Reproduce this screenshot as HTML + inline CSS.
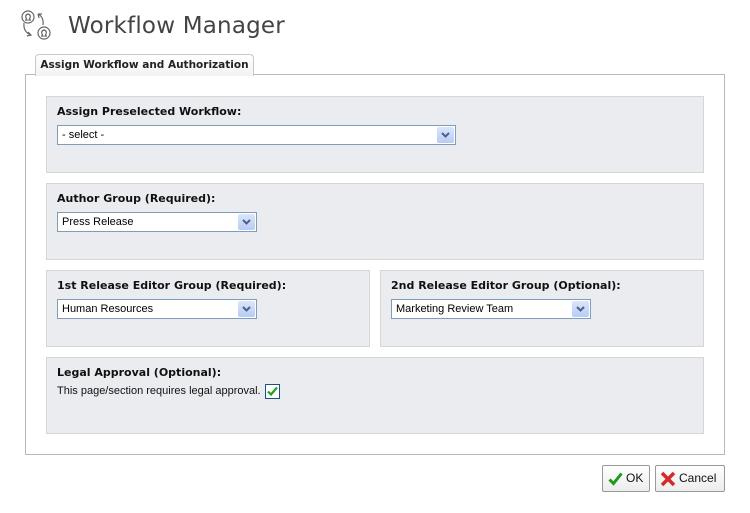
<!DOCTYPE html>
<html><head><style>
body{margin:0;width:750px;height:513px;background:#fff;font-family:"Liberation Sans",sans-serif;position:relative;overflow:hidden}
.h{position:absolute;left:68px;top:13px;font-size:23px;color:#444;font-family:"DejaVu Sans","Liberation Sans",sans-serif;letter-spacing:0.2px;white-space:nowrap}
.tab{position:absolute;left:35px;top:54px;width:217px;height:21px;border:1px solid #c8c8c8;border-bottom:none;border-radius:4px 4px 0 0;background:linear-gradient(#fff,#f2f2f2);font-family:"DejaVu Sans",sans-serif;font-size:10.5px;font-weight:bold;color:#222;line-height:21px;text-align:center;z-index:2;white-space:nowrap}
.box{position:absolute;left:25px;top:74px;width:698px;height:379px;border:1px solid #b8b8b8;background:#fff}
.p{position:absolute;background:#ebecf0;border:1px solid #d6d6d8;box-sizing:border-box}
.l{position:absolute;left:10px;top:8px;font-family:"DejaVu Sans",sans-serif;font-size:11px;font-weight:bold;color:#111;white-space:nowrap}
.s{position:absolute;left:10px;top:28px;height:20px;box-sizing:border-box;border:1px solid #7f9db9;background:#fff;font-size:11px;line-height:18px;padding-left:4px;color:#000}
.s i{position:absolute;right:1px;top:1px;width:17px;height:16px;background:linear-gradient(#dbe6fb,#b6cbf5);border-radius:2px}
.t{position:absolute;left:10px;top:27px;font-size:11px;color:#111;white-space:nowrap}
.cb{position:absolute;left:218px;top:26px;width:13px;height:13px;border:1px solid #1c5180;background:#fff}
.btn{position:absolute;top:465px;height:27px;box-sizing:border-box;border:1px solid #999;border-radius:2px;background:linear-gradient(#fff,#ececec);font-size:12px;line-height:25px;color:#111}
</style></head><body>
<svg style="position:absolute;left:15px;top:8px" width="50" height="36" viewBox="0 0 50 36" fill="none" stroke="#666" stroke-width="1.2">
<circle cx="13" cy="9" r="6"/><path d="M10 12 h2 q-3 -5 1 -6 q4 1 1 6 h2"/>
<path d="M9 15 q-1 9 7 12 m-3 -3 l3 3 l-4 1"/>
<circle cx="29" cy="25" r="6"/><path d="M26 28 h2 q-3 -5 1 -6 q4 1 1 6 h2"/>
<path d="M28 17 q1 -8 -5 -11 m0 0 l1 4 m-1 -4 l4 0"/>
</svg>
<div class="h">Workflow Manager</div>
<div class="tab">Assign Workflow and Authorization</div>
<div class="box"></div>
<div class="p" style="left:46px;top:96px;width:658px;height:77px"><div class="l">Assign Preselected Workflow:</div><div class="s" style="width:399px">- select -<i><svg width="17" height="16"><path d="M5 6 l3.5 3.5 l3.5 -3.5" stroke="#4d6185" stroke-width="2" fill="none"/></svg></i></div></div>
<div class="p" style="left:46px;top:183px;width:658px;height:77px"><div class="l">Author Group (Required):</div><div class="s" style="width:200px">Press Release<i><svg width="17" height="16"><path d="M5 6 l3.5 3.5 l3.5 -3.5" stroke="#4d6185" stroke-width="2" fill="none"/></svg></i></div></div>
<div class="p" style="left:46px;top:270px;width:324px;height:77px"><div class="l">1st Release Editor Group (Required):</div><div class="s" style="width:200px">Human Resources<i><svg width="17" height="16"><path d="M5 6 l3.5 3.5 l3.5 -3.5" stroke="#4d6185" stroke-width="2" fill="none"/></svg></i></div></div>
<div class="p" style="left:380px;top:270px;width:324px;height:77px"><div class="l">2nd Release Editor Group (Optional):</div><div class="s" style="width:200px">Marketing Review Team<i><svg width="17" height="16"><path d="M5 6 l3.5 3.5 l3.5 -3.5" stroke="#4d6185" stroke-width="2" fill="none"/></svg></i></div></div>
<div class="p" style="left:46px;top:357px;width:658px;height:77px"><div class="l">Legal Approval (Optional):</div><div class="t">This page/section requires legal approval.</div><div class="cb"><svg width="13" height="13"><path d="M2 6.5 l3 3 l6 -7" stroke="#21a121" stroke-width="2.2" fill="none"/></svg></div></div>
<div class="btn" style="left:602px;width:48px"><svg style="position:absolute;left:5px;top:6px" width="15" height="14"><path d="M1.5 7.5 l4 4 l8 -10" stroke="#1f9a1f" stroke-width="3" fill="none"/></svg><span style="position:absolute;left:23px">OK</span></div>
<div class="btn" style="left:655px;width:70px"><svg style="position:absolute;left:4px;top:5px" width="16" height="16"><path d="M2 2 l12 12 M14 2 l-12 12" stroke="#d42a2a" stroke-width="3.5"/></svg><span style="position:absolute;left:23px">Cancel</span></div>
</body></html>
